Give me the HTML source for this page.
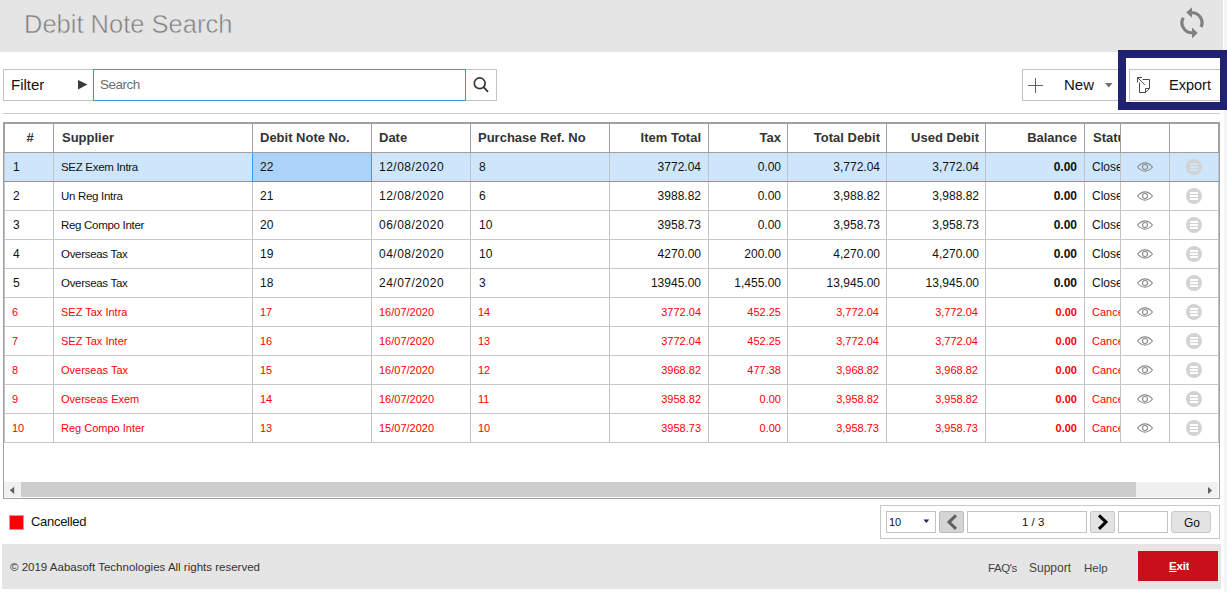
<!DOCTYPE html>
<html><head><meta charset="utf-8"><title>Debit Note Search</title>
<style>
*{box-sizing:border-box;margin:0;padding:0}
html,body{width:1227px;height:592px;overflow:hidden;background:#fff;font-family:"Liberation Sans",sans-serif;color:#000}
.a{position:absolute}
.t{position:absolute;white-space:nowrap;overflow:hidden}
.hd{font-weight:bold;font-size:13px;color:#333;height:28px;line-height:28px}
.cl{font-size:12px;color:#111;height:28px;line-height:28px}
.rd{font-size:11px;color:#f00;height:28px;line-height:28px}
.eye{position:absolute;width:18px;height:12px}
.lst{position:absolute;width:16px;height:16px;border-radius:50%;background:#d3d3d3}
</style></head><body>

<div class="a" style="left:1224px;top:0;width:3px;height:592px;background:#f4f5f7"></div>
<div class="a" style="left:0;top:0;width:1223px;height:52px;background:#e5e5e5"></div>
<div class="t" style="left:24px;top:9px;font-size:25.5px;line-height:30px;color:#808080;-webkit-text-stroke:0.5px #e5e5e5">Debit Note Search</div>
<svg class="a" style="left:1178px;top:5px" width="30" height="36" viewBox="1178 5 30 36">
<path d="M1191.5 12.75 A10 10 0 0 1 1201.06 26.98" fill="none" stroke="#808080" stroke-width="3.2"/>
<path d="M1186.2 12.4 L1192 7.2 L1192 17.8 Z" fill="#808080"/>
<path d="M1183.34 17.75 A10 10 0 0 0 1192.5 32.75" fill="none" stroke="#808080" stroke-width="3.2"/>
<path d="M1197.7 33.1 L1192 27.6 L1192 38.6 Z" fill="#808080"/>
</svg>
<div class="a" style="left:3px;top:69px;width:91px;height:32px;border:1px solid #c3c3c3"></div>
<div class="t" style="left:11px;top:76px;font-size:15px;line-height:18px;color:#111">Filter</div>
<svg class="a" style="left:77px;top:79px" width="12" height="12" viewBox="0 0 12 12"><path d="M1 1 L10.5 5.5 L1 10.5 Z" fill="#3a3a3a"/></svg>
<div class="a" style="left:465px;top:69px;width:32px;height:32px;border:1px solid #c3c3c3"></div>
<div class="a" style="left:93px;top:69px;width:373px;height:32px;border:1px solid #3c8fec"></div>
<div class="t" style="left:100px;top:77px;font-size:13.5px;letter-spacing:-0.5px;line-height:16px;color:#6d6d6d">Search</div>
<svg class="a" style="left:470px;top:75px" width="22" height="22" viewBox="470 75 22 22"><circle cx="479.7" cy="83.3" r="5.4" fill="none" stroke="#383838" stroke-width="1.7"/><path d="M483.6 87.2 L488 91.8" stroke="#383838" stroke-width="1.8"/></svg>
<div class="a" style="left:3px;top:113px;width:1217px;height:1px;background:#cbcbcb"></div>
<div class="a" style="left:1022px;top:69px;width:104px;height:32px;border:1px solid #c3c3c3"></div>
<div class="a" style="left:1028px;top:85px;width:15px;height:1px;background:#606060"></div>
<div class="a" style="left:1035px;top:78px;width:1px;height:15px;background:#606060"></div>
<div class="t" style="left:1064px;top:76px;font-size:15px;line-height:18px;color:#111">New</div>
<svg class="a" style="left:1104px;top:82px" width="10" height="7" viewBox="0 0 10 7"><path d="M1 1 H8.5 L4.75 5.5 Z" fill="#707070"/></svg>
<div class="a" style="left:1129px;top:69px;width:92px;height:32px;border:1px solid #c3c3c3"></div>
<svg class="a" style="left:1130px;top:70px" width="30" height="30" viewBox="1130 70 30 30">
<g fill="none" stroke="#4a4a4a" stroke-width="1">
<path d="M1137.5 82.5 V77.5 H1142"/><path d="M1137.5 77.5 L1144.8 84.8"/>
<path d="M1142.5 79.5 H1149.5 V88.5 L1145.5 92.5 H1139.5 V82.5"/><path d="M1145.5 92.5 V88.5 H1149.5"/>
</g></svg>
<div class="t" style="left:1169px;top:76px;font-size:14.5px;line-height:18px;color:#111">Export</div>
<div class="a" style="left:1118px;top:50px;width:110px;height:60px;border:8px solid #1e2270"></div>
<div class="a" style="left:3px;top:122px;width:1217px;height:377px;border:1px solid #a0a0a0"></div>
<div class="a" style="left:4px;top:123px;width:1215px;height:1px;background:#a0a0a0"></div>
<div class="a" style="left:4px;top:152px;width:1215px;height:1px;background:#a0a0a0"></div>
<div class="a" style="left:4px;top:123px;width:1px;height:30px;background:#a0a0a0"></div>
<div class="a" style="left:53px;top:123px;width:1px;height:30px;background:#a0a0a0"></div>
<div class="a" style="left:252px;top:123px;width:1px;height:30px;background:#a0a0a0"></div>
<div class="a" style="left:371px;top:123px;width:1px;height:30px;background:#a0a0a0"></div>
<div class="a" style="left:470px;top:123px;width:1px;height:30px;background:#a0a0a0"></div>
<div class="a" style="left:609px;top:123px;width:1px;height:30px;background:#a0a0a0"></div>
<div class="a" style="left:708px;top:123px;width:1px;height:30px;background:#a0a0a0"></div>
<div class="a" style="left:787px;top:123px;width:1px;height:30px;background:#a0a0a0"></div>
<div class="a" style="left:886px;top:123px;width:1px;height:30px;background:#a0a0a0"></div>
<div class="a" style="left:985px;top:123px;width:1px;height:30px;background:#a0a0a0"></div>
<div class="a" style="left:1084px;top:123px;width:1px;height:30px;background:#a0a0a0"></div>
<div class="a" style="left:1120px;top:123px;width:1px;height:30px;background:#a0a0a0"></div>
<div class="a" style="left:1169px;top:123px;width:1px;height:30px;background:#a0a0a0"></div>
<div class="a" style="left:1218px;top:123px;width:1px;height:30px;background:#a0a0a0"></div>
<div class="t hd" style="left:6px;top:124px;width:48px;text-align:center">#</div>
<div class="t hd" style="left:62px;top:124px;width:190px">Supplier</div>
<div class="t hd" style="left:260px;top:124px;width:111px">Debit Note No.</div>
<div class="t hd" style="left:379px;top:124px;width:91px">Date</div>
<div class="t hd" style="left:478px;top:124px;width:131px">Purchase Ref. No</div>
<div class="t hd" style="left:610px;top:124px;width:91px;text-align:right">Item Total</div>
<div class="t hd" style="left:709px;top:124px;width:72px;text-align:right">Tax</div>
<div class="t hd" style="left:788px;top:124px;width:92px;text-align:right">Total Debit</div>
<div class="t hd" style="left:887px;top:124px;width:92px;text-align:right">Used Debit</div>
<div class="t hd" style="left:986px;top:124px;width:91px;text-align:right">Balance</div>
<div class="t hd" style="left:1093px;top:124px;width:27px">Statu</div>
<div class="t hd" style="left:1129px;top:124px;width:40px"></div>
<div class="t hd" style="left:1178px;top:124px;width:40px"></div>
<div class="a" style="left:4px;top:153px;width:1215px;height:28px;background:#cde6fc"></div>
<div class="a" style="left:253px;top:153px;width:118px;height:28px;background:#acd3f9"></div>
<div class="a" style="left:4px;top:181px;width:1215px;height:1px;background:#5fa0e2"></div>
<div class="a" style="left:4px;top:153px;width:1px;height:28px;background:#c3c3c3"></div>
<div class="a" style="left:53px;top:153px;width:1px;height:28px;background:#c3c3c3"></div>
<div class="a" style="left:252px;top:153px;width:1px;height:28px;background:#3399fb"></div>
<div class="a" style="left:371px;top:153px;width:1px;height:28px;background:#3399fb"></div>
<div class="a" style="left:470px;top:153px;width:1px;height:28px;background:#c3c3c3"></div>
<div class="a" style="left:609px;top:153px;width:1px;height:28px;background:#c3c3c3"></div>
<div class="a" style="left:708px;top:153px;width:1px;height:28px;background:#c3c3c3"></div>
<div class="a" style="left:787px;top:153px;width:1px;height:28px;background:#c3c3c3"></div>
<div class="a" style="left:886px;top:153px;width:1px;height:28px;background:#c3c3c3"></div>
<div class="a" style="left:985px;top:153px;width:1px;height:28px;background:#c3c3c3"></div>
<div class="a" style="left:1084px;top:153px;width:1px;height:28px;background:#c3c3c3"></div>
<div class="a" style="left:1120px;top:153px;width:1px;height:28px;background:#c3c3c3"></div>
<div class="a" style="left:1169px;top:153px;width:1px;height:28px;background:#c3c3c3"></div>
<div class="a" style="left:1218px;top:153px;width:1px;height:28px;background:#c3c3c3"></div>
<div class="a" style="left:252px;top:181px;width:120px;height:1px;background:#3399fb"></div>
<div class="t cl" style="left:13px;top:153px;width:40px;">1</div>
<div class="t cl" style="left:61px;top:153px;width:191px;font-size:11.5px;letter-spacing:-0.3px;">SEZ Exem Intra</div>
<div class="t cl" style="left:260px;top:153px;width:111px;">22</div>
<div class="t cl" style="left:379px;top:153px;width:91px;letter-spacing:0.5px;">12/08/2020</div>
<div class="t cl" style="left:479px;top:153px;width:130px;">8</div>
<div class="t cl" style="left:610px;top:153px;width:91px;text-align:right;">3772.04</div>
<div class="t cl" style="left:709px;top:153px;width:72px;text-align:right;">0.00</div>
<div class="t cl" style="left:788px;top:153px;width:92px;text-align:right;">3,772.04</div>
<div class="t cl" style="left:887px;top:153px;width:92px;text-align:right;">3,772.04</div>
<div class="t cl" style="left:986px;top:153px;width:91px;text-align:right;font-weight:bold;">0.00</div>
<div class="t cl" style="left:1092px;top:153px;width:28px;">Closed</div>
<svg class="a" style="left:1136px;top:161px" width="18" height="12" viewBox="0 0 18 12"><path d="M1.5 6 Q9 -2.3 16.5 6 Q9 14.3 1.5 6 Z" fill="none" stroke="#8a8a8a" stroke-width="1.1"/><circle cx="9" cy="6" r="2.5" fill="none" stroke="#8a8a8a" stroke-width="1.1"/></svg>
<div class="lst" style="left:1186px;top:159px"></div>
<div class="a" style="left:1190px;top:163px;width:8px;height:2px;background:#cde6fc"></div>
<div class="a" style="left:1190px;top:166px;width:8px;height:2px;background:#cde6fc"></div>
<div class="a" style="left:1190px;top:169px;width:8px;height:2px;background:#cde6fc"></div>
<div class="a" style="left:4px;top:210px;width:1215px;height:1px;background:#c8c8c8"></div>
<div class="a" style="left:4px;top:182px;width:1px;height:28px;background:#c3c3c3"></div>
<div class="a" style="left:53px;top:182px;width:1px;height:28px;background:#c3c3c3"></div>
<div class="a" style="left:252px;top:182px;width:1px;height:28px;background:#c3c3c3"></div>
<div class="a" style="left:371px;top:182px;width:1px;height:28px;background:#c3c3c3"></div>
<div class="a" style="left:470px;top:182px;width:1px;height:28px;background:#c3c3c3"></div>
<div class="a" style="left:609px;top:182px;width:1px;height:28px;background:#c3c3c3"></div>
<div class="a" style="left:708px;top:182px;width:1px;height:28px;background:#c3c3c3"></div>
<div class="a" style="left:787px;top:182px;width:1px;height:28px;background:#c3c3c3"></div>
<div class="a" style="left:886px;top:182px;width:1px;height:28px;background:#c3c3c3"></div>
<div class="a" style="left:985px;top:182px;width:1px;height:28px;background:#c3c3c3"></div>
<div class="a" style="left:1084px;top:182px;width:1px;height:28px;background:#c3c3c3"></div>
<div class="a" style="left:1120px;top:182px;width:1px;height:28px;background:#c3c3c3"></div>
<div class="a" style="left:1169px;top:182px;width:1px;height:28px;background:#c3c3c3"></div>
<div class="a" style="left:1218px;top:182px;width:1px;height:28px;background:#c3c3c3"></div>
<div class="t cl" style="left:13px;top:182px;width:40px;">2</div>
<div class="t cl" style="left:61px;top:182px;width:191px;font-size:11.5px;letter-spacing:-0.3px;">Un Reg Intra</div>
<div class="t cl" style="left:260px;top:182px;width:111px;">21</div>
<div class="t cl" style="left:379px;top:182px;width:91px;letter-spacing:0.5px;">12/08/2020</div>
<div class="t cl" style="left:479px;top:182px;width:130px;">6</div>
<div class="t cl" style="left:610px;top:182px;width:91px;text-align:right;">3988.82</div>
<div class="t cl" style="left:709px;top:182px;width:72px;text-align:right;">0.00</div>
<div class="t cl" style="left:788px;top:182px;width:92px;text-align:right;">3,988.82</div>
<div class="t cl" style="left:887px;top:182px;width:92px;text-align:right;">3,988.82</div>
<div class="t cl" style="left:986px;top:182px;width:91px;text-align:right;font-weight:bold;">0.00</div>
<div class="t cl" style="left:1092px;top:182px;width:28px;">Closed</div>
<svg class="a" style="left:1136px;top:190px" width="18" height="12" viewBox="0 0 18 12"><path d="M1.5 6 Q9 -2.3 16.5 6 Q9 14.3 1.5 6 Z" fill="none" stroke="#8a8a8a" stroke-width="1.1"/><circle cx="9" cy="6" r="2.5" fill="none" stroke="#8a8a8a" stroke-width="1.1"/></svg>
<div class="lst" style="left:1186px;top:188px"></div>
<div class="a" style="left:1190px;top:192px;width:8px;height:2px;background:#fff"></div>
<div class="a" style="left:1190px;top:195px;width:8px;height:2px;background:#fff"></div>
<div class="a" style="left:1190px;top:198px;width:8px;height:2px;background:#fff"></div>
<div class="a" style="left:4px;top:239px;width:1215px;height:1px;background:#c8c8c8"></div>
<div class="a" style="left:4px;top:211px;width:1px;height:28px;background:#c3c3c3"></div>
<div class="a" style="left:53px;top:211px;width:1px;height:28px;background:#c3c3c3"></div>
<div class="a" style="left:252px;top:211px;width:1px;height:28px;background:#c3c3c3"></div>
<div class="a" style="left:371px;top:211px;width:1px;height:28px;background:#c3c3c3"></div>
<div class="a" style="left:470px;top:211px;width:1px;height:28px;background:#c3c3c3"></div>
<div class="a" style="left:609px;top:211px;width:1px;height:28px;background:#c3c3c3"></div>
<div class="a" style="left:708px;top:211px;width:1px;height:28px;background:#c3c3c3"></div>
<div class="a" style="left:787px;top:211px;width:1px;height:28px;background:#c3c3c3"></div>
<div class="a" style="left:886px;top:211px;width:1px;height:28px;background:#c3c3c3"></div>
<div class="a" style="left:985px;top:211px;width:1px;height:28px;background:#c3c3c3"></div>
<div class="a" style="left:1084px;top:211px;width:1px;height:28px;background:#c3c3c3"></div>
<div class="a" style="left:1120px;top:211px;width:1px;height:28px;background:#c3c3c3"></div>
<div class="a" style="left:1169px;top:211px;width:1px;height:28px;background:#c3c3c3"></div>
<div class="a" style="left:1218px;top:211px;width:1px;height:28px;background:#c3c3c3"></div>
<div class="t cl" style="left:13px;top:211px;width:40px;">3</div>
<div class="t cl" style="left:61px;top:211px;width:191px;font-size:11.5px;letter-spacing:-0.3px;">Reg Compo Inter</div>
<div class="t cl" style="left:260px;top:211px;width:111px;">20</div>
<div class="t cl" style="left:379px;top:211px;width:91px;letter-spacing:0.5px;">06/08/2020</div>
<div class="t cl" style="left:479px;top:211px;width:130px;">10</div>
<div class="t cl" style="left:610px;top:211px;width:91px;text-align:right;">3958.73</div>
<div class="t cl" style="left:709px;top:211px;width:72px;text-align:right;">0.00</div>
<div class="t cl" style="left:788px;top:211px;width:92px;text-align:right;">3,958.73</div>
<div class="t cl" style="left:887px;top:211px;width:92px;text-align:right;">3,958.73</div>
<div class="t cl" style="left:986px;top:211px;width:91px;text-align:right;font-weight:bold;">0.00</div>
<div class="t cl" style="left:1092px;top:211px;width:28px;">Closed</div>
<svg class="a" style="left:1136px;top:219px" width="18" height="12" viewBox="0 0 18 12"><path d="M1.5 6 Q9 -2.3 16.5 6 Q9 14.3 1.5 6 Z" fill="none" stroke="#8a8a8a" stroke-width="1.1"/><circle cx="9" cy="6" r="2.5" fill="none" stroke="#8a8a8a" stroke-width="1.1"/></svg>
<div class="lst" style="left:1186px;top:217px"></div>
<div class="a" style="left:1190px;top:221px;width:8px;height:2px;background:#fff"></div>
<div class="a" style="left:1190px;top:224px;width:8px;height:2px;background:#fff"></div>
<div class="a" style="left:1190px;top:227px;width:8px;height:2px;background:#fff"></div>
<div class="a" style="left:4px;top:268px;width:1215px;height:1px;background:#c8c8c8"></div>
<div class="a" style="left:4px;top:240px;width:1px;height:28px;background:#c3c3c3"></div>
<div class="a" style="left:53px;top:240px;width:1px;height:28px;background:#c3c3c3"></div>
<div class="a" style="left:252px;top:240px;width:1px;height:28px;background:#c3c3c3"></div>
<div class="a" style="left:371px;top:240px;width:1px;height:28px;background:#c3c3c3"></div>
<div class="a" style="left:470px;top:240px;width:1px;height:28px;background:#c3c3c3"></div>
<div class="a" style="left:609px;top:240px;width:1px;height:28px;background:#c3c3c3"></div>
<div class="a" style="left:708px;top:240px;width:1px;height:28px;background:#c3c3c3"></div>
<div class="a" style="left:787px;top:240px;width:1px;height:28px;background:#c3c3c3"></div>
<div class="a" style="left:886px;top:240px;width:1px;height:28px;background:#c3c3c3"></div>
<div class="a" style="left:985px;top:240px;width:1px;height:28px;background:#c3c3c3"></div>
<div class="a" style="left:1084px;top:240px;width:1px;height:28px;background:#c3c3c3"></div>
<div class="a" style="left:1120px;top:240px;width:1px;height:28px;background:#c3c3c3"></div>
<div class="a" style="left:1169px;top:240px;width:1px;height:28px;background:#c3c3c3"></div>
<div class="a" style="left:1218px;top:240px;width:1px;height:28px;background:#c3c3c3"></div>
<div class="t cl" style="left:13px;top:240px;width:40px;">4</div>
<div class="t cl" style="left:61px;top:240px;width:191px;font-size:11.5px;letter-spacing:-0.3px;">Overseas Tax</div>
<div class="t cl" style="left:260px;top:240px;width:111px;">19</div>
<div class="t cl" style="left:379px;top:240px;width:91px;letter-spacing:0.5px;">04/08/2020</div>
<div class="t cl" style="left:479px;top:240px;width:130px;">10</div>
<div class="t cl" style="left:610px;top:240px;width:91px;text-align:right;">4270.00</div>
<div class="t cl" style="left:709px;top:240px;width:72px;text-align:right;">200.00</div>
<div class="t cl" style="left:788px;top:240px;width:92px;text-align:right;">4,270.00</div>
<div class="t cl" style="left:887px;top:240px;width:92px;text-align:right;">4,270.00</div>
<div class="t cl" style="left:986px;top:240px;width:91px;text-align:right;font-weight:bold;">0.00</div>
<div class="t cl" style="left:1092px;top:240px;width:28px;">Closed</div>
<svg class="a" style="left:1136px;top:248px" width="18" height="12" viewBox="0 0 18 12"><path d="M1.5 6 Q9 -2.3 16.5 6 Q9 14.3 1.5 6 Z" fill="none" stroke="#8a8a8a" stroke-width="1.1"/><circle cx="9" cy="6" r="2.5" fill="none" stroke="#8a8a8a" stroke-width="1.1"/></svg>
<div class="lst" style="left:1186px;top:246px"></div>
<div class="a" style="left:1190px;top:250px;width:8px;height:2px;background:#fff"></div>
<div class="a" style="left:1190px;top:253px;width:8px;height:2px;background:#fff"></div>
<div class="a" style="left:1190px;top:256px;width:8px;height:2px;background:#fff"></div>
<div class="a" style="left:4px;top:297px;width:1215px;height:1px;background:#c8c8c8"></div>
<div class="a" style="left:4px;top:269px;width:1px;height:28px;background:#c3c3c3"></div>
<div class="a" style="left:53px;top:269px;width:1px;height:28px;background:#c3c3c3"></div>
<div class="a" style="left:252px;top:269px;width:1px;height:28px;background:#c3c3c3"></div>
<div class="a" style="left:371px;top:269px;width:1px;height:28px;background:#c3c3c3"></div>
<div class="a" style="left:470px;top:269px;width:1px;height:28px;background:#c3c3c3"></div>
<div class="a" style="left:609px;top:269px;width:1px;height:28px;background:#c3c3c3"></div>
<div class="a" style="left:708px;top:269px;width:1px;height:28px;background:#c3c3c3"></div>
<div class="a" style="left:787px;top:269px;width:1px;height:28px;background:#c3c3c3"></div>
<div class="a" style="left:886px;top:269px;width:1px;height:28px;background:#c3c3c3"></div>
<div class="a" style="left:985px;top:269px;width:1px;height:28px;background:#c3c3c3"></div>
<div class="a" style="left:1084px;top:269px;width:1px;height:28px;background:#c3c3c3"></div>
<div class="a" style="left:1120px;top:269px;width:1px;height:28px;background:#c3c3c3"></div>
<div class="a" style="left:1169px;top:269px;width:1px;height:28px;background:#c3c3c3"></div>
<div class="a" style="left:1218px;top:269px;width:1px;height:28px;background:#c3c3c3"></div>
<div class="t cl" style="left:13px;top:269px;width:40px;">5</div>
<div class="t cl" style="left:61px;top:269px;width:191px;font-size:11.5px;letter-spacing:-0.3px;">Overseas Tax</div>
<div class="t cl" style="left:260px;top:269px;width:111px;">18</div>
<div class="t cl" style="left:379px;top:269px;width:91px;letter-spacing:0.5px;">24/07/2020</div>
<div class="t cl" style="left:479px;top:269px;width:130px;">3</div>
<div class="t cl" style="left:610px;top:269px;width:91px;text-align:right;">13945.00</div>
<div class="t cl" style="left:709px;top:269px;width:72px;text-align:right;">1,455.00</div>
<div class="t cl" style="left:788px;top:269px;width:92px;text-align:right;">13,945.00</div>
<div class="t cl" style="left:887px;top:269px;width:92px;text-align:right;">13,945.00</div>
<div class="t cl" style="left:986px;top:269px;width:91px;text-align:right;font-weight:bold;">0.00</div>
<div class="t cl" style="left:1092px;top:269px;width:28px;">Closed</div>
<svg class="a" style="left:1136px;top:277px" width="18" height="12" viewBox="0 0 18 12"><path d="M1.5 6 Q9 -2.3 16.5 6 Q9 14.3 1.5 6 Z" fill="none" stroke="#8a8a8a" stroke-width="1.1"/><circle cx="9" cy="6" r="2.5" fill="none" stroke="#8a8a8a" stroke-width="1.1"/></svg>
<div class="lst" style="left:1186px;top:275px"></div>
<div class="a" style="left:1190px;top:279px;width:8px;height:2px;background:#fff"></div>
<div class="a" style="left:1190px;top:282px;width:8px;height:2px;background:#fff"></div>
<div class="a" style="left:1190px;top:285px;width:8px;height:2px;background:#fff"></div>
<div class="a" style="left:4px;top:326px;width:1215px;height:1px;background:#c8c8c8"></div>
<div class="a" style="left:4px;top:298px;width:1px;height:28px;background:#c3c3c3"></div>
<div class="a" style="left:53px;top:298px;width:1px;height:28px;background:#c3c3c3"></div>
<div class="a" style="left:252px;top:298px;width:1px;height:28px;background:#c3c3c3"></div>
<div class="a" style="left:371px;top:298px;width:1px;height:28px;background:#c3c3c3"></div>
<div class="a" style="left:470px;top:298px;width:1px;height:28px;background:#c3c3c3"></div>
<div class="a" style="left:609px;top:298px;width:1px;height:28px;background:#c3c3c3"></div>
<div class="a" style="left:708px;top:298px;width:1px;height:28px;background:#c3c3c3"></div>
<div class="a" style="left:787px;top:298px;width:1px;height:28px;background:#c3c3c3"></div>
<div class="a" style="left:886px;top:298px;width:1px;height:28px;background:#c3c3c3"></div>
<div class="a" style="left:985px;top:298px;width:1px;height:28px;background:#c3c3c3"></div>
<div class="a" style="left:1084px;top:298px;width:1px;height:28px;background:#c3c3c3"></div>
<div class="a" style="left:1120px;top:298px;width:1px;height:28px;background:#c3c3c3"></div>
<div class="a" style="left:1169px;top:298px;width:1px;height:28px;background:#c3c3c3"></div>
<div class="a" style="left:1218px;top:298px;width:1px;height:28px;background:#c3c3c3"></div>
<div class="t rd" style="left:12px;top:298px;width:41px;">6</div>
<div class="t rd" style="left:61px;top:298px;width:191px;">SEZ Tax Intra</div>
<div class="t rd" style="left:260px;top:298px;width:111px;">17</div>
<div class="t rd" style="left:379px;top:298px;width:91px;">16/07/2020</div>
<div class="t rd" style="left:478px;top:298px;width:131px;">14</div>
<div class="t rd" style="left:610px;top:298px;width:91px;text-align:right;">3772.04</div>
<div class="t rd" style="left:709px;top:298px;width:72px;text-align:right;">452.25</div>
<div class="t rd" style="left:788px;top:298px;width:91px;text-align:right;">3,772.04</div>
<div class="t rd" style="left:887px;top:298px;width:91px;text-align:right;">3,772.04</div>
<div class="t rd" style="left:986px;top:298px;width:91px;text-align:right;font-weight:bold;">0.00</div>
<div class="t rd" style="left:1092px;top:298px;width:28px;">Cancelled</div>
<svg class="a" style="left:1136px;top:306px" width="18" height="12" viewBox="0 0 18 12"><path d="M1.5 6 Q9 -2.3 16.5 6 Q9 14.3 1.5 6 Z" fill="none" stroke="#8a8a8a" stroke-width="1.1"/><circle cx="9" cy="6" r="2.5" fill="none" stroke="#8a8a8a" stroke-width="1.1"/></svg>
<div class="lst" style="left:1186px;top:304px"></div>
<div class="a" style="left:1190px;top:308px;width:8px;height:2px;background:#fff"></div>
<div class="a" style="left:1190px;top:311px;width:8px;height:2px;background:#fff"></div>
<div class="a" style="left:1190px;top:314px;width:8px;height:2px;background:#fff"></div>
<div class="a" style="left:4px;top:355px;width:1215px;height:1px;background:#c8c8c8"></div>
<div class="a" style="left:4px;top:327px;width:1px;height:28px;background:#c3c3c3"></div>
<div class="a" style="left:53px;top:327px;width:1px;height:28px;background:#c3c3c3"></div>
<div class="a" style="left:252px;top:327px;width:1px;height:28px;background:#c3c3c3"></div>
<div class="a" style="left:371px;top:327px;width:1px;height:28px;background:#c3c3c3"></div>
<div class="a" style="left:470px;top:327px;width:1px;height:28px;background:#c3c3c3"></div>
<div class="a" style="left:609px;top:327px;width:1px;height:28px;background:#c3c3c3"></div>
<div class="a" style="left:708px;top:327px;width:1px;height:28px;background:#c3c3c3"></div>
<div class="a" style="left:787px;top:327px;width:1px;height:28px;background:#c3c3c3"></div>
<div class="a" style="left:886px;top:327px;width:1px;height:28px;background:#c3c3c3"></div>
<div class="a" style="left:985px;top:327px;width:1px;height:28px;background:#c3c3c3"></div>
<div class="a" style="left:1084px;top:327px;width:1px;height:28px;background:#c3c3c3"></div>
<div class="a" style="left:1120px;top:327px;width:1px;height:28px;background:#c3c3c3"></div>
<div class="a" style="left:1169px;top:327px;width:1px;height:28px;background:#c3c3c3"></div>
<div class="a" style="left:1218px;top:327px;width:1px;height:28px;background:#c3c3c3"></div>
<div class="t rd" style="left:12px;top:327px;width:41px;">7</div>
<div class="t rd" style="left:61px;top:327px;width:191px;">SEZ Tax Inter</div>
<div class="t rd" style="left:260px;top:327px;width:111px;">16</div>
<div class="t rd" style="left:379px;top:327px;width:91px;">16/07/2020</div>
<div class="t rd" style="left:478px;top:327px;width:131px;">13</div>
<div class="t rd" style="left:610px;top:327px;width:91px;text-align:right;">3772.04</div>
<div class="t rd" style="left:709px;top:327px;width:72px;text-align:right;">452.25</div>
<div class="t rd" style="left:788px;top:327px;width:91px;text-align:right;">3,772.04</div>
<div class="t rd" style="left:887px;top:327px;width:91px;text-align:right;">3,772.04</div>
<div class="t rd" style="left:986px;top:327px;width:91px;text-align:right;font-weight:bold;">0.00</div>
<div class="t rd" style="left:1092px;top:327px;width:28px;">Cancelled</div>
<svg class="a" style="left:1136px;top:335px" width="18" height="12" viewBox="0 0 18 12"><path d="M1.5 6 Q9 -2.3 16.5 6 Q9 14.3 1.5 6 Z" fill="none" stroke="#8a8a8a" stroke-width="1.1"/><circle cx="9" cy="6" r="2.5" fill="none" stroke="#8a8a8a" stroke-width="1.1"/></svg>
<div class="lst" style="left:1186px;top:333px"></div>
<div class="a" style="left:1190px;top:337px;width:8px;height:2px;background:#fff"></div>
<div class="a" style="left:1190px;top:340px;width:8px;height:2px;background:#fff"></div>
<div class="a" style="left:1190px;top:343px;width:8px;height:2px;background:#fff"></div>
<div class="a" style="left:4px;top:384px;width:1215px;height:1px;background:#c8c8c8"></div>
<div class="a" style="left:4px;top:356px;width:1px;height:28px;background:#c3c3c3"></div>
<div class="a" style="left:53px;top:356px;width:1px;height:28px;background:#c3c3c3"></div>
<div class="a" style="left:252px;top:356px;width:1px;height:28px;background:#c3c3c3"></div>
<div class="a" style="left:371px;top:356px;width:1px;height:28px;background:#c3c3c3"></div>
<div class="a" style="left:470px;top:356px;width:1px;height:28px;background:#c3c3c3"></div>
<div class="a" style="left:609px;top:356px;width:1px;height:28px;background:#c3c3c3"></div>
<div class="a" style="left:708px;top:356px;width:1px;height:28px;background:#c3c3c3"></div>
<div class="a" style="left:787px;top:356px;width:1px;height:28px;background:#c3c3c3"></div>
<div class="a" style="left:886px;top:356px;width:1px;height:28px;background:#c3c3c3"></div>
<div class="a" style="left:985px;top:356px;width:1px;height:28px;background:#c3c3c3"></div>
<div class="a" style="left:1084px;top:356px;width:1px;height:28px;background:#c3c3c3"></div>
<div class="a" style="left:1120px;top:356px;width:1px;height:28px;background:#c3c3c3"></div>
<div class="a" style="left:1169px;top:356px;width:1px;height:28px;background:#c3c3c3"></div>
<div class="a" style="left:1218px;top:356px;width:1px;height:28px;background:#c3c3c3"></div>
<div class="t rd" style="left:12px;top:356px;width:41px;">8</div>
<div class="t rd" style="left:61px;top:356px;width:191px;">Overseas Tax</div>
<div class="t rd" style="left:260px;top:356px;width:111px;">15</div>
<div class="t rd" style="left:379px;top:356px;width:91px;">16/07/2020</div>
<div class="t rd" style="left:478px;top:356px;width:131px;">12</div>
<div class="t rd" style="left:610px;top:356px;width:91px;text-align:right;">3968.82</div>
<div class="t rd" style="left:709px;top:356px;width:72px;text-align:right;">477.38</div>
<div class="t rd" style="left:788px;top:356px;width:91px;text-align:right;">3,968.82</div>
<div class="t rd" style="left:887px;top:356px;width:91px;text-align:right;">3,968.82</div>
<div class="t rd" style="left:986px;top:356px;width:91px;text-align:right;font-weight:bold;">0.00</div>
<div class="t rd" style="left:1092px;top:356px;width:28px;">Cancelled</div>
<svg class="a" style="left:1136px;top:364px" width="18" height="12" viewBox="0 0 18 12"><path d="M1.5 6 Q9 -2.3 16.5 6 Q9 14.3 1.5 6 Z" fill="none" stroke="#8a8a8a" stroke-width="1.1"/><circle cx="9" cy="6" r="2.5" fill="none" stroke="#8a8a8a" stroke-width="1.1"/></svg>
<div class="lst" style="left:1186px;top:362px"></div>
<div class="a" style="left:1190px;top:366px;width:8px;height:2px;background:#fff"></div>
<div class="a" style="left:1190px;top:369px;width:8px;height:2px;background:#fff"></div>
<div class="a" style="left:1190px;top:372px;width:8px;height:2px;background:#fff"></div>
<div class="a" style="left:4px;top:413px;width:1215px;height:1px;background:#c8c8c8"></div>
<div class="a" style="left:4px;top:385px;width:1px;height:28px;background:#c3c3c3"></div>
<div class="a" style="left:53px;top:385px;width:1px;height:28px;background:#c3c3c3"></div>
<div class="a" style="left:252px;top:385px;width:1px;height:28px;background:#c3c3c3"></div>
<div class="a" style="left:371px;top:385px;width:1px;height:28px;background:#c3c3c3"></div>
<div class="a" style="left:470px;top:385px;width:1px;height:28px;background:#c3c3c3"></div>
<div class="a" style="left:609px;top:385px;width:1px;height:28px;background:#c3c3c3"></div>
<div class="a" style="left:708px;top:385px;width:1px;height:28px;background:#c3c3c3"></div>
<div class="a" style="left:787px;top:385px;width:1px;height:28px;background:#c3c3c3"></div>
<div class="a" style="left:886px;top:385px;width:1px;height:28px;background:#c3c3c3"></div>
<div class="a" style="left:985px;top:385px;width:1px;height:28px;background:#c3c3c3"></div>
<div class="a" style="left:1084px;top:385px;width:1px;height:28px;background:#c3c3c3"></div>
<div class="a" style="left:1120px;top:385px;width:1px;height:28px;background:#c3c3c3"></div>
<div class="a" style="left:1169px;top:385px;width:1px;height:28px;background:#c3c3c3"></div>
<div class="a" style="left:1218px;top:385px;width:1px;height:28px;background:#c3c3c3"></div>
<div class="t rd" style="left:12px;top:385px;width:41px;">9</div>
<div class="t rd" style="left:61px;top:385px;width:191px;">Overseas Exem</div>
<div class="t rd" style="left:260px;top:385px;width:111px;">14</div>
<div class="t rd" style="left:379px;top:385px;width:91px;">16/07/2020</div>
<div class="t rd" style="left:478px;top:385px;width:131px;">11</div>
<div class="t rd" style="left:610px;top:385px;width:91px;text-align:right;">3958.82</div>
<div class="t rd" style="left:709px;top:385px;width:72px;text-align:right;">0.00</div>
<div class="t rd" style="left:788px;top:385px;width:91px;text-align:right;">3,958.82</div>
<div class="t rd" style="left:887px;top:385px;width:91px;text-align:right;">3,958.82</div>
<div class="t rd" style="left:986px;top:385px;width:91px;text-align:right;font-weight:bold;">0.00</div>
<div class="t rd" style="left:1092px;top:385px;width:28px;">Cancelled</div>
<svg class="a" style="left:1136px;top:393px" width="18" height="12" viewBox="0 0 18 12"><path d="M1.5 6 Q9 -2.3 16.5 6 Q9 14.3 1.5 6 Z" fill="none" stroke="#8a8a8a" stroke-width="1.1"/><circle cx="9" cy="6" r="2.5" fill="none" stroke="#8a8a8a" stroke-width="1.1"/></svg>
<div class="lst" style="left:1186px;top:391px"></div>
<div class="a" style="left:1190px;top:395px;width:8px;height:2px;background:#fff"></div>
<div class="a" style="left:1190px;top:398px;width:8px;height:2px;background:#fff"></div>
<div class="a" style="left:1190px;top:401px;width:8px;height:2px;background:#fff"></div>
<div class="a" style="left:4px;top:442px;width:1215px;height:1px;background:#c8c8c8"></div>
<div class="a" style="left:4px;top:414px;width:1px;height:28px;background:#c3c3c3"></div>
<div class="a" style="left:53px;top:414px;width:1px;height:28px;background:#c3c3c3"></div>
<div class="a" style="left:252px;top:414px;width:1px;height:28px;background:#c3c3c3"></div>
<div class="a" style="left:371px;top:414px;width:1px;height:28px;background:#c3c3c3"></div>
<div class="a" style="left:470px;top:414px;width:1px;height:28px;background:#c3c3c3"></div>
<div class="a" style="left:609px;top:414px;width:1px;height:28px;background:#c3c3c3"></div>
<div class="a" style="left:708px;top:414px;width:1px;height:28px;background:#c3c3c3"></div>
<div class="a" style="left:787px;top:414px;width:1px;height:28px;background:#c3c3c3"></div>
<div class="a" style="left:886px;top:414px;width:1px;height:28px;background:#c3c3c3"></div>
<div class="a" style="left:985px;top:414px;width:1px;height:28px;background:#c3c3c3"></div>
<div class="a" style="left:1084px;top:414px;width:1px;height:28px;background:#c3c3c3"></div>
<div class="a" style="left:1120px;top:414px;width:1px;height:28px;background:#c3c3c3"></div>
<div class="a" style="left:1169px;top:414px;width:1px;height:28px;background:#c3c3c3"></div>
<div class="a" style="left:1218px;top:414px;width:1px;height:28px;background:#c3c3c3"></div>
<div class="t rd" style="left:12px;top:414px;width:41px;">10</div>
<div class="t rd" style="left:61px;top:414px;width:191px;">Reg Compo Inter</div>
<div class="t rd" style="left:260px;top:414px;width:111px;">13</div>
<div class="t rd" style="left:379px;top:414px;width:91px;">15/07/2020</div>
<div class="t rd" style="left:478px;top:414px;width:131px;">10</div>
<div class="t rd" style="left:610px;top:414px;width:91px;text-align:right;">3958.73</div>
<div class="t rd" style="left:709px;top:414px;width:72px;text-align:right;">0.00</div>
<div class="t rd" style="left:788px;top:414px;width:91px;text-align:right;">3,958.73</div>
<div class="t rd" style="left:887px;top:414px;width:91px;text-align:right;">3,958.73</div>
<div class="t rd" style="left:986px;top:414px;width:91px;text-align:right;font-weight:bold;">0.00</div>
<div class="t rd" style="left:1092px;top:414px;width:28px;">Cancelled</div>
<svg class="a" style="left:1136px;top:422px" width="18" height="12" viewBox="0 0 18 12"><path d="M1.5 6 Q9 -2.3 16.5 6 Q9 14.3 1.5 6 Z" fill="none" stroke="#8a8a8a" stroke-width="1.1"/><circle cx="9" cy="6" r="2.5" fill="none" stroke="#8a8a8a" stroke-width="1.1"/></svg>
<div class="lst" style="left:1186px;top:420px"></div>
<div class="a" style="left:1190px;top:424px;width:8px;height:2px;background:#fff"></div>
<div class="a" style="left:1190px;top:427px;width:8px;height:2px;background:#fff"></div>
<div class="a" style="left:1190px;top:430px;width:8px;height:2px;background:#fff"></div>
<div class="a" style="left:4px;top:482px;width:1214px;height:15px;background:#f0f0f0"></div>
<div class="a" style="left:21px;top:482px;width:1115px;height:15px;background:#cdcdcd"></div>
<svg class="a" style="left:9px;top:486px" width="6" height="9" viewBox="0 0 6 9"><path d="M5.2 0.8 V7.9 L0.8 4.35 Z" fill="#606060"/></svg>
<svg class="a" style="left:1207px;top:486px" width="6" height="9" viewBox="0 0 6 9"><path d="M1 0.9 V8 L5.1 4.45 Z" fill="#606060"/></svg>
<div class="a" style="left:9px;top:515px;width:15px;height:15px;background:#f00;border:1px solid #c8a0a0"></div>
<div class="t" style="left:31px;top:514px;font-size:13px;letter-spacing:-0.3px;line-height:16px;color:#111">Cancelled</div>
<div class="a" style="left:880px;top:505px;width:340px;height:34px;border:1px solid #c8c8c8"></div>
<div class="a" style="left:886px;top:511px;width:50px;height:22px;border:1px solid #c3c3c3;background:#fff"></div>
<div class="t" style="left:889px;top:515px;font-size:11px;line-height:14px;color:#111">10</div>
<svg class="a" style="left:923px;top:519px" width="7" height="5" viewBox="0 0 7 5"><path d="M0.5 0.5 H6.2 L3.35 4 Z" fill="#1b2a5a"/></svg>
<div class="a" style="left:939px;top:511px;width:25px;height:22px;border:1px solid #bcbcbc;border-radius:2px;background:#d4d4d4"></div>
<svg class="a" style="left:944px;top:513px" width="16" height="18" viewBox="944 513 16 18"><path d="M956 515.3 L949 522.1 L956 528.9" fill="none" stroke="#606060" stroke-width="3"/></svg>
<div class="a" style="left:967px;top:511px;width:120px;height:22px;border:1px solid #c3c3c3;background:#fff"></div>
<div class="t" style="left:1022px;top:515px;font-size:11.5px;line-height:14px;color:#111">1 / 3</div>
<div class="a" style="left:1090px;top:511px;width:25px;height:22px;border:1px solid #c8c8c8;border-radius:2px;background:#e3e3e3"></div>
<svg class="a" style="left:1094px;top:513px" width="16" height="18" viewBox="1094 513 16 18"><path d="M1099 515.3 L1106 522.1 L1099 528.9" fill="none" stroke="#000" stroke-width="3"/></svg>
<div class="a" style="left:1118px;top:511px;width:50px;height:22px;border:1px solid #c3c3c3;background:#fff"></div>
<div class="a" style="left:1171px;top:511px;width:40px;height:22px;border:1px solid #c8c8c8;border-radius:3px;background:#e3e3e3"></div>
<div class="t" style="left:1172px;top:516px;width:40px;text-align:center;font-size:12px;line-height:14px;color:#111">Go</div>
<div class="a" style="left:2px;top:544px;width:1219px;height:45px;background:#e5e5e5"></div>
<div class="t" style="left:10px;top:560px;font-size:11.5px;line-height:14px;color:#333">&copy; 2019 Aabasoft Technologies All rights reserved</div>
<div class="t" style="left:988px;top:561px;font-size:11.5px;letter-spacing:-0.4px;line-height:14px;color:#444">FAQ's</div>
<div class="t" style="left:1029px;top:561px;font-size:12px;line-height:14px;color:#444">Support</div>
<div class="t" style="left:1084px;top:561px;font-size:11.5px;line-height:14px;color:#444">Help</div>
<div class="a" style="left:1138px;top:551px;width:80px;height:30px;background:#c8101a"></div>
<div class="t" style="left:1169px;top:559px;font-size:11.5px;font-weight:bold;line-height:14px;color:#fff;letter-spacing:-0.2px"><u>E</u>xit</div>
</body></html>
